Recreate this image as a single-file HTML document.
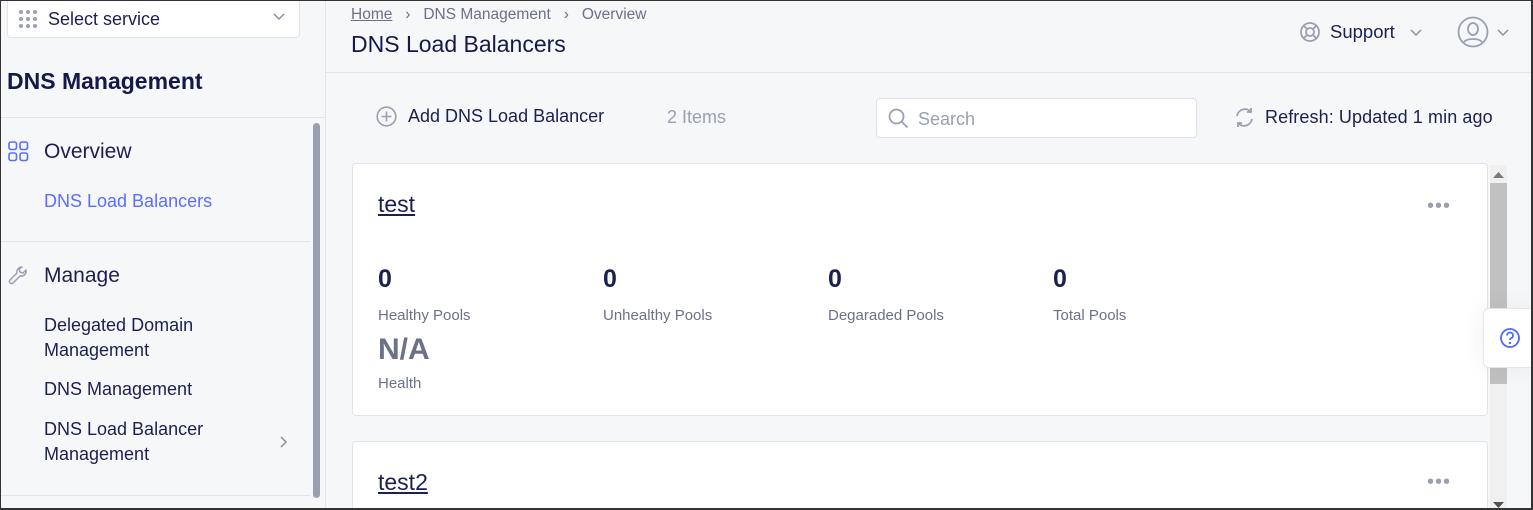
<!DOCTYPE html>
<html><head><meta charset="utf-8"><style>
*{box-sizing:border-box;margin:0;padding:0}
html{overflow:hidden;width:1533px;height:510px}
body{width:1533px;height:510px;overflow:hidden;background:#f6f7f9;font-family:"Liberation Sans",sans-serif;color:#1b2050;position:relative}
.frame{position:absolute;left:0;top:0;width:1533px;height:510px;border:1px solid #333;border-right-width:2px;border-bottom-width:2px;pointer-events:none;z-index:20}
.side{position:absolute;left:0;top:0;width:326px;height:510px;border-right:1px solid #e3e5ec;background:#f6f7f9}
.abs{position:absolute;white-space:nowrap}
.sel{left:7px;top:-1px;width:293px;height:39px;background:#fff;border:1px solid #e3e5ec;border-radius:4px}
.hr{position:absolute;height:1px;background:#e3e5ec}
.card{position:absolute;left:352px;width:1136px;background:#fff;border:1px solid #e3e5ec;border-radius:4px}
.num{font-size:25px;font-weight:bold;color:#1b2050}
.lbl{font-size:15px;color:#6b7187}
</style></head><body>
<div class="frame"></div>
<div class="side">
  <div class="abs sel">
    <svg class="abs" style="left:10px;top:9px" width="20" height="20"><g fill="#9aa0b0"><circle cx="3" cy="3" r="2"/><circle cx="10" cy="3" r="2"/><circle cx="17" cy="3" r="2"/><circle cx="3" cy="10" r="2"/><circle cx="10" cy="10" r="2"/><circle cx="17" cy="10" r="2"/><circle cx="3" cy="17" r="2"/><circle cx="10" cy="17" r="2"/><circle cx="17" cy="17" r="2"/></g></svg>
    <span class="abs" style="left:40px;top:9px;font-size:18px">Select service</span>
    <svg class="abs" style="left:265px;top:13px" width="12" height="8"><path d="M1 1l5 5 5-5" fill="none" stroke="#8a90a0" stroke-width="1.5"/></svg>
  </div>
  <div class="abs" style="left:7px;top:68px;font-size:23px;font-weight:bold;color:#14194a">DNS Management</div>
  <div class="hr" style="left:0;top:117px;width:326px"></div>
  <svg class="abs" style="left:8px;top:141px" width="21" height="21"><g fill="none" stroke="#5b6cff" stroke-width="1.6"><rect x="1" y="1" width="7.5" height="7.5" rx="2"/><rect x="12" y="1" width="7.5" height="7.5" rx="2"/><rect x="1" y="12" width="7.5" height="7.5" rx="2"/><rect x="12" y="12" width="7.5" height="7.5" rx="2"/></g></svg>
  <div class="abs" style="left:44px;top:140px;font-size:21px">Overview</div>
  <div class="abs" style="left:44px;top:191px;font-size:18px;color:#5b6cff">DNS Load Balancers</div>
  <div class="hr" style="left:0;top:241px;width:310px"></div>
  <svg class="abs" style="left:8px;top:265px" width="21" height="21"><path d="M14 2a5 5 0 0 0-5 6L2 15a2 2 0 0 0 3 3l7-7a5 5 0 0 0 6-6l-3 3-3-1-1-3z" fill="none" stroke="#9aa0b0" stroke-width="1.5" stroke-linejoin="round"/></svg>
  <div class="abs" style="left:44px;top:264px;font-size:21px">Manage</div>
  <div class="abs" style="left:44px;top:313px;font-size:18px;line-height:25px">Delegated Domain<br>Management</div>
  <div class="abs" style="left:44px;top:379px;font-size:18px">DNS Management</div>
  <div class="abs" style="left:44px;top:417px;font-size:18px;line-height:25px">DNS Load Balancer<br>Management</div>
  <svg class="abs" style="left:280px;top:436px" width="8" height="12"><path d="M1 1l5 5-5 5" fill="none" stroke="#8a90a0" stroke-width="1.5"/></svg>
  <div class="hr" style="left:0;top:495px;width:310px"></div>
  <div class="abs" style="left:313px;top:123px;width:7px;height:375px;background:#9aa0b0;border-radius:4px"></div>
</div>
<div class="abs" style="left:351px;top:6px;font-size:15.5px;color:#6b7187"><span style="text-decoration:underline">Home</span> &nbsp;&nbsp;›&nbsp;&nbsp; DNS Management &nbsp;&nbsp;›&nbsp;&nbsp; Overview</div>
<div class="abs" style="left:351px;top:31px;font-size:23px;color:#14194a">DNS Load Balancers</div>
<svg class="abs" style="left:1299px;top:21px" width="22" height="22"><g fill="none" stroke="#9aa0b0" stroke-width="1.8"><circle cx="11" cy="11" r="9"/><circle cx="11" cy="11" r="4"/><path d="M5 5l3 3M17 5l-3 3M5 17l3-3M17 17l-3-3"/></g></svg>
<div class="abs" style="left:1330px;top:21px;font-size:18.5px">Support</div>
<svg class="abs" style="left:1410px;top:29px" width="12" height="8"><path d="M1 1l5 5 5-5" fill="none" stroke="#8a90a0" stroke-width="1.5"/></svg>
<svg class="abs" style="left:1457px;top:16px" width="32" height="32"><g fill="none" stroke="#9aa0b0" stroke-width="1.8"><circle cx="16" cy="16" r="14.5"/><ellipse cx="16" cy="13" rx="5" ry="6"/><path d="M7 26c3-4 15-4 18 0"/></g></svg>
<svg class="abs" style="left:1497px;top:29px" width="12" height="8"><path d="M1 1l5 5 5-5" fill="none" stroke="#8a90a0" stroke-width="1.5"/></svg>
<div class="hr" style="left:326px;top:72px;width:1207px"></div>
<svg class="abs" style="left:376px;top:106px" width="21" height="21"><g fill="none" stroke="#9aa0b0" stroke-width="1.6"><circle cx="10.5" cy="10.5" r="9.3"/><path d="M10.5 5.5v10M5.5 10.5h10"/></g></svg>
<div class="abs" style="left:408px;top:106px;font-size:18px">Add DNS Load Balancer</div>
<div class="abs" style="left:667px;top:107px;font-size:18px;color:#9aa0b0">2 Items</div>
<div class="abs" style="left:876px;top:98px;width:321px;height:40px;background:#fff;border:1px solid #dfe2ea;border-radius:4px">
  <svg class="abs" style="left:11px;top:9px" width="21" height="21"><g fill="none" stroke="#9aa0b0" stroke-width="1.8"><circle cx="8.5" cy="8.5" r="7"/><path d="M13.5 13.5l6 6"/></g></svg>
  <span class="abs" style="left:41px;top:10px;font-size:18px;color:#9aa0b0">Search</span>
</div>
<svg class="abs" style="left:1234px;top:107px" width="21" height="21"><g fill="none" stroke="#9aa0b0" stroke-width="1.8"><path d="M3 9a8 8 0 0 1 14-4M18 12a8 8 0 0 1-14 4"/><path d="M17 1v4h-4M4 20v-4h4"/></g></svg>
<div class="abs" style="left:1265px;top:107px;font-size:18px;letter-spacing:0.1px">Refresh: Updated 1 min ago</div>
<div class="card" style="top:163px;height:253px">
  <div class="abs" style="left:25px;top:27px;font-size:23px;text-decoration:underline">test</div>
  <div class="abs" style="left:1074px;top:31px;font-size:20px;color:#9aa0b0;letter-spacing:1px">•••</div>
  <div class="abs num" style="left:25px;top:101px">0</div>
  <div class="abs lbl" style="left:25px;top:143px">Healthy Pools</div>
  <div class="abs num" style="left:250px;top:101px">0</div>
  <div class="abs lbl" style="left:250px;top:143px">Unhealthy Pools</div>
  <div class="abs num" style="left:475px;top:101px">0</div>
  <div class="abs lbl" style="left:475px;top:143px">Degaraded Pools</div>
  <div class="abs num" style="left:700px;top:101px">0</div>
  <div class="abs lbl" style="left:700px;top:143px">Total Pools</div>
  <div class="abs" style="left:25px;top:169px;font-size:30px;font-weight:bold;color:#6b7187">N/A</div>
  <div class="abs lbl" style="left:25px;top:211px">Health</div>
</div>
<div class="card" style="top:441px;height:69px;border-bottom:none;border-radius:4px 4px 0 0">
  <div class="abs" style="left:25px;top:27px;font-size:23px;text-decoration:underline">test2</div>
  <div class="abs" style="left:1074px;top:29px;font-size:20px;color:#9aa0b0;letter-spacing:1px">•••</div>
</div>
<div class="abs" style="left:1490px;top:165px;width:17px;height:345px;background:#f0f0f0"></div>
<svg class="abs" style="left:1493px;top:171px" width="11" height="7"><path d="M0 7l5.5-6 5.5 6z" fill="#7a7a7a"/></svg>
<div class="abs" style="left:1490px;top:183px;width:17px;height:201px;background:#c1c1c1"></div>
<svg class="abs" style="left:1493px;top:502px" width="11" height="7"><path d="M0 0l5.5 6 5.5-6z" fill="#505050"/></svg>
<div class="abs" style="left:1483px;top:308px;width:55px;height:60px;background:#fff;border:1px solid #e3e5ec;border-radius:6px;box-shadow:0 0 25px rgba(0,0,0,.06)">
  <svg class="abs" style="left:15px;top:18px" width="22" height="22"><circle cx="11" cy="11" r="9" fill="none" stroke="#4a6cf7" stroke-width="1.8"/><path d="M8 8.5a3 3 0 1 1 4 2.8c-.8.4-1 .9-1 1.7" fill="none" stroke="#4a6cf7" stroke-width="1.8"/><circle cx="11" cy="16" r="1.2" fill="#4a6cf7"/></svg>
</div>
</body></html>
